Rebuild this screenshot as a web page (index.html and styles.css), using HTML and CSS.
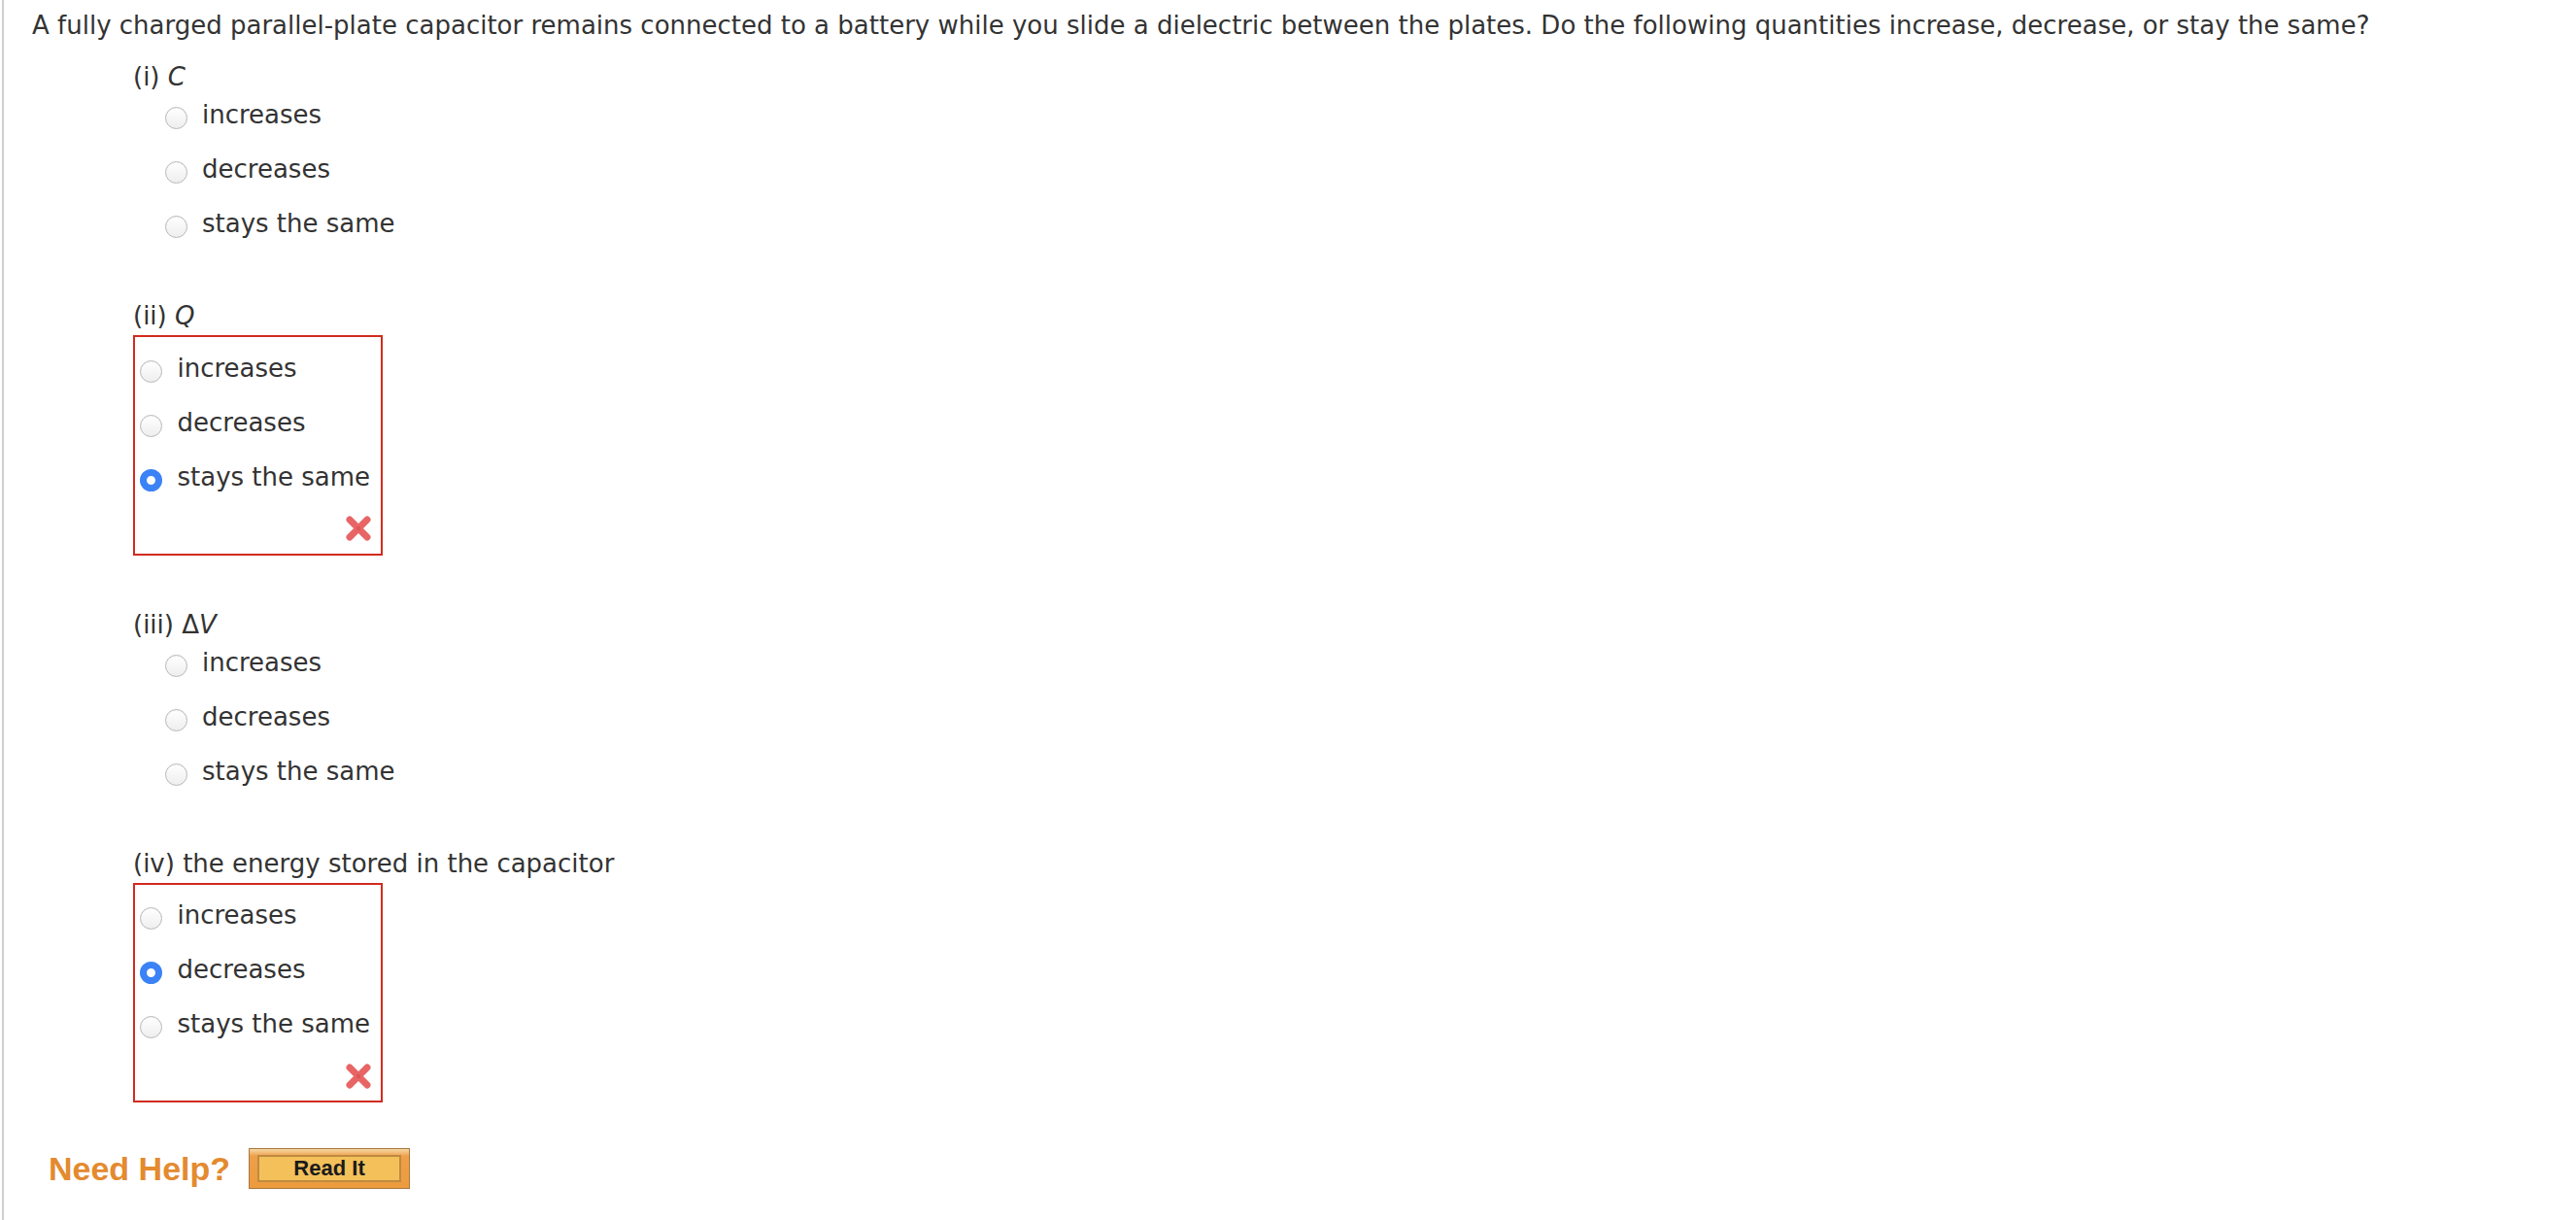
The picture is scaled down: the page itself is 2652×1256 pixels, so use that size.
FILE: index.html
```html
<!DOCTYPE html>
<html>
<head>
<meta charset="utf-8">
<link rel="stylesheet" href="styles.css">
</head>
<body>
<div class="page">
  <p class="question">A fully charged parallel-plate capacitor remains connected to a battery while you slide a dielectric between the plates. Do the following quantities increase, decrease, or stay the same?</p>

  <div class="part">
    <div class="label">(i) <i>C</i></div>
    <div class="options">
      <label class="opt"><span class="radio"></span><span>increases</span></label>
      <label class="opt"><span class="radio"></span><span>decreases</span></label>
      <label class="opt"><span class="radio"></span><span>stays the same</span></label>
    </div>
  </div>

  <div class="part boxed">
    <div class="label">(ii) <i>Q</i></div>
    <div class="box">
      <label class="opt"><span class="radio"></span><span>increases</span></label>
      <label class="opt"><span class="radio"></span><span>decreases</span></label>
      <label class="opt"><span class="radio checked"></span><span>stays the same</span></label>
      <div class="mark">
        <svg class="xicon" viewBox="0 0 28 28" width="28" height="28">
          <path d="M5 5 L23 23 M23 5 L5 23" stroke="#e86566" stroke-width="7" stroke-linecap="round" fill="none"/>
          <rect x="12" y="12" width="4" height="4" fill="#d94f50" opacity="0.6"/>
        </svg>
      </div>
    </div>
  </div>

  <div class="part">
    <div class="label">(iii) Δ<i>V</i></div>
    <div class="options">
      <label class="opt"><span class="radio"></span><span>increases</span></label>
      <label class="opt"><span class="radio"></span><span>decreases</span></label>
      <label class="opt"><span class="radio"></span><span>stays the same</span></label>
    </div>
  </div>

  <div class="part boxed last">
    <div class="label">(iv) the energy stored in the capacitor</div>
    <div class="box">
      <label class="opt"><span class="radio"></span><span>increases</span></label>
      <label class="opt"><span class="radio checked"></span><span>decreases</span></label>
      <label class="opt"><span class="radio"></span><span>stays the same</span></label>
      <div class="mark">
        <svg class="xicon" viewBox="0 0 28 28" width="28" height="28">
          <path d="M5 5 L23 23 M23 5 L5 23" stroke="#e86566" stroke-width="7" stroke-linecap="round" fill="none"/>
          <rect x="12" y="12" width="4" height="4" fill="#d94f50" opacity="0.6"/>
        </svg>
      </div>
    </div>
  </div>

  <div class="help">
    <span class="need">Need Help?</span>
    <span class="readit"><span class="readit-inner">Read It</span></span>
  </div>
</div>
</body>
</html>
```

FILE: styles.css
```css
html, body {
  margin: 0;
  padding: 0;
  background: #ffffff;
}

body {
  padding-left: 2px;
  font-family: "DejaVu Sans", Verdana, sans-serif;
  font-size: 26px;
  color: #333333;
}

.page {
  border-left: 2px solid #cfcfcf;
  min-height: 1256px;
  box-sizing: border-box;
  padding-left: 29px;
  padding-top: 1px;
}

.question {
  margin: 0 0 17px 0;
  line-height: 50px;
  white-space: nowrap;
}

.part {
  margin-left: 104px;
  margin-bottom: 56px;
}

.part.boxed {
  margin-bottom: 60px;
}

.part.last {
  margin-bottom: 0;
}

.label {
  line-height: 22px;
  height: 22px;
  white-space: nowrap;
}

.label i {
  font-style: oblique;
}

.options {
  padding-left: 33px;
}

.opt {
  display: flex;
  align-items: center;
  height: 56px;
  gap: 15px;
  white-space: nowrap;
}

.radio {
  display: inline-block;
  flex: none;
  width: 23px;
  height: 23px;
  box-sizing: border-box;
  border-radius: 50%;
  border: 1px solid #b8b8b8;
  background: linear-gradient(#ffffff, #eeeeee);
  box-shadow: inset 0 1px 1px rgba(0,0,0,0.04);
  margin-top: 7px;
}

.radio.checked {
  border: 7.5px solid #3b82f6;
  background: #ffffff;
  box-shadow: none;
}

.box {
  display: inline-block;
  margin-top: 9px;
  border: 2.5px solid #d12b1f;
  padding: 3.5px 11px 0 4.5px;
}

.box .opt {
  gap: 16px;
}

.mark {
  display: flex;
  justify-content: flex-end;
  align-items: center;
  height: 51px;
  margin-right: -2px;
}

.xicon {
  display: block;
  filter: blur(0.6px);
}

.help {
  display: flex;
  align-items: center;
  gap: 19px;
  margin-left: 17px;
  margin-top: 47px;
}

.need {
  font-family: "Liberation Sans", Arial, sans-serif;
  font-weight: bold;
  font-size: 34px;
  color: #e48a2f;
}

.readit {
  display: flex;
  box-sizing: border-box;
  width: 166px;
  height: 42px;
  padding: 6px 8px 6px 8px;
  border: 1px solid #a9773c;
  background: linear-gradient(#f7d9a7 0%, #eda04a 18%, #ec9b3e 100%);
}

.readit-inner {
  flex: 1;
  display: flex;
  align-items: center;
  justify-content: center;
  border: 2px solid #c08a3e;
  background: #f3c05a;
  font-family: "Liberation Sans", Arial, sans-serif;
  font-weight: bold;
  font-size: 22px;
  color: #1a1a1a;
}
```
